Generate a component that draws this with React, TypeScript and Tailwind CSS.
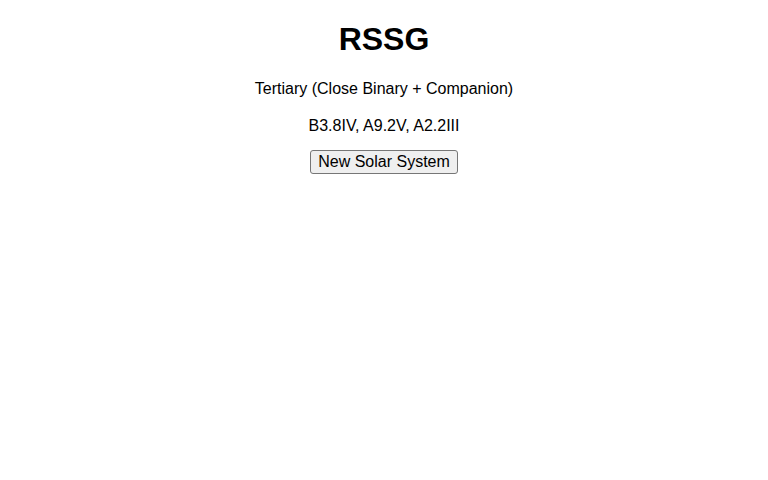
export default function App() {
  return (
    <div className="min-h-[480px] bg-white text-center text-black font-['Liberation_Sans',Arial,sans-serif]">
      <h1 className="pt-[21px] text-[32px] leading-[37px] font-bold">RSSG</h1>
      <p className="mt-[22px] text-[16px] leading-[18px]">Tertiary (Close Binary + Companion)</p>
      <p className="mt-[19px] text-[16px] leading-[18px]">B3.8IV, A9.2V, A2.2III</p>
      <div className="mt-[15px] flex justify-center">
        <button className="h-[24px] px-[7px] text-[16px] leading-[18px] bg-[#efefef] border border-[#767676] rounded-[3px] text-black">
          New Solar System
        </button>
      </div>
    </div>
  );
}
